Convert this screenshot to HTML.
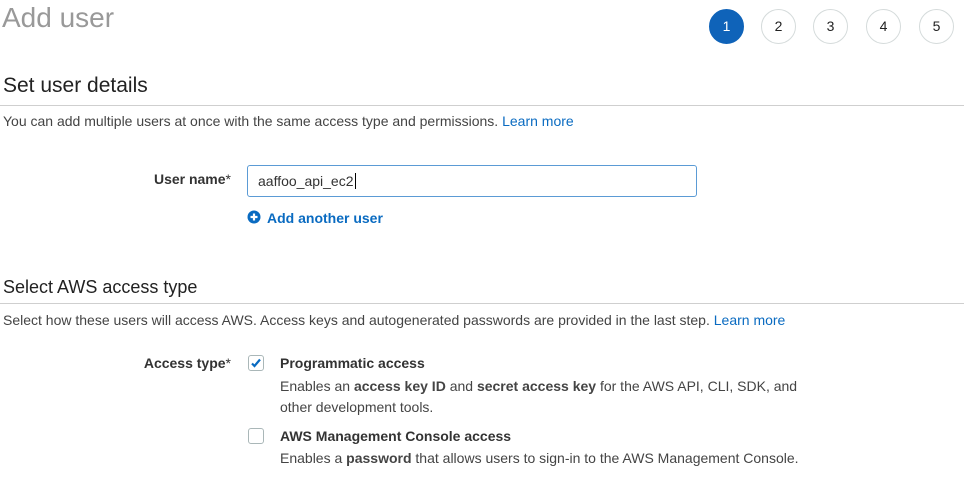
<!DOCTYPE html>
<html><head><style>
body{margin:0;width:964px;height:477px;background:#fff;font-family:"Liberation Sans",Arial,sans-serif;color:#16191f;position:relative;overflow:hidden}
.a{position:absolute;white-space:nowrap}
.c{position:absolute;top:9px;width:33px;height:33px;border:1px solid #d5dbdb;border-radius:50%;text-align:center;line-height:33px;font-size:14px;color:#222}
.hr{position:absolute;left:0;width:964px;height:1px;background:#cfcfcf}
.l{color:#0a6bc1}
.lab{font-size:14px;font-weight:bold;color:#333;text-align:right;right:733px}
.t{font-size:14px;color:#444}
.cb{position:absolute;width:14px;height:14px;border:1px solid #aab7b8;border-radius:3px;background:#fff}
</style></head><body>
<div class="a" style="left:2px;top:2px;font-size:28px;color:#999">Add user</div>
<div class="c" style="left:709px;background:#0f63b9;border-color:#0f63b9;color:#fff">1</div>
<div class="c" style="left:761px">2</div>
<div class="c" style="left:813px">3</div>
<div class="c" style="left:866px">4</div>
<div class="c" style="left:919px">5</div>
<div class="a" style="left:3px;top:74px;font-size:21px;color:#222">Set user details</div>
<div class="hr" style="top:105px"></div>
<div class="a t" style="left:3px;top:113px">You can add multiple users at once with the same access type and permissions. <span class="l">Learn more</span></div>
<div class="a lab" style="top:171px">User name<span style="font-weight:normal">*</span></div>
<div class="a" style="left:247px;top:165px;width:448px;height:30px;border:1px solid #5b9bd5;border-radius:3px"></div>
<div class="a" style="left:258px;top:173px;font-size:14px;color:#333">aaffoo_api_ec2<span style="border-left:1px solid #000;margin-left:1px"></span></div>
<svg class="a" style="left:247px;top:210px" width="14" height="14" viewBox="0 0 14 14"><circle cx="7" cy="7" r="6.5" fill="#0a6bc1"/><path d="M7 3.5v7M3.5 7h7" stroke="#fff" stroke-width="2.2"/></svg>
<div class="a l" style="left:267px;top:210px;font-size:14px;font-weight:bold">Add another user</div>
<div class="a" style="left:3px;top:277px;font-size:18px;color:#222">Select AWS access type</div>
<div class="hr" style="top:303px"></div>
<div class="a t" style="left:3px;top:312px">Select how these users will access AWS. Access keys and autogenerated passwords are provided in the last step. <span class="l">Learn more</span></div>
<div class="a lab" style="top:355px">Access type<span style="font-weight:normal">*</span></div>
<div class="cb" style="left:248px;top:355px"><svg width="14" height="14" viewBox="0 0 14 14"><path d="M3 7.5l2.5 2.5L11 3.5" stroke="#0a6bc1" stroke-width="2.2" fill="none"/></svg></div>
<div class="a t" style="left:280px;top:355px;font-weight:bold;color:#333">Programmatic access</div>
<div class="a t" style="left:280px;top:376px;line-height:21px">Enables an <b>access key ID</b> and <b>secret access key</b> for the AWS API, CLI, SDK, and<br>other development tools.</div>
<div class="cb" style="left:248px;top:428px"></div>
<div class="a t" style="left:280px;top:428px;font-weight:bold;color:#333">AWS Management Console access</div>
<div class="a t" style="left:280px;top:450px">Enables a <b>password</b> that allows users to sign-in to the AWS Management Console.</div>
</body></html>
